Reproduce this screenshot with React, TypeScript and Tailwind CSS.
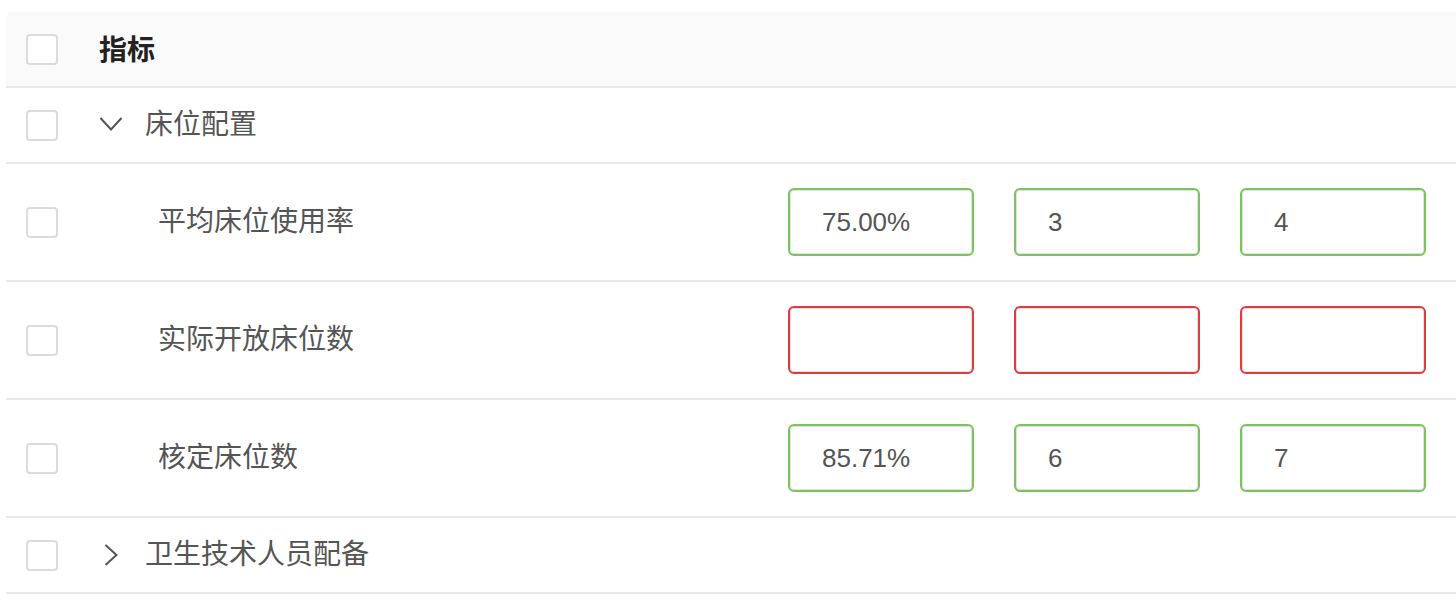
import React from 'react'

type Cell = { value: string; ok: boolean }

interface Metric {
  name: string
  cells: Cell[]
}

const metrics: Metric[] = [
  {
    name: '平均床位使用率',
    cells: [
      { value: '75.00%', ok: true },
      { value: '3', ok: true },
      { value: '4', ok: true },
    ],
  },
  {
    name: '实际开放床位数',
    cells: [
      { value: '', ok: false },
      { value: '', ok: false },
      { value: '', ok: false },
    ],
  },
  {
    name: '核定床位数',
    cells: [
      { value: '85.71%', ok: true },
      { value: '6', ok: true },
      { value: '7', ok: true },
    ],
  },
]

const font = { fontFamily: '"Liberation Sans", "Noto Sans CJK SC", sans-serif' }

function Checkbox() {
  return <span className="block w-[32px] h-[31px] rounded-[4px] border-2 border-[#dcdcdc] bg-white" />
}

function CheckCell() {
  return (
    <div className="w-[93px] shrink-0 pl-[20px] flex items-center">
      <Checkbox />
    </div>
  )
}

function Chevron({ open }: { open: boolean }) {
  return (
    <svg width="24" height="24" viewBox="0 0 24 24" className="shrink-0" fill="none" stroke="#555" strokeWidth="2">
      {open ? <path d="M1.5 5 L12 16.5 L22.5 5" /> : <path d="M6.5 2 L17.5 12 L6.5 22" />}
    </svg>
  )
}

function ValueInput({ cell }: { cell: Cell }) {
  return (
    <div
      className={`w-[186px] h-[68px] shrink-0 rounded-[6px] border-2 bg-white flex items-center pl-[32px] text-[26px] text-[#555] shadow-[inset_0_0_0_1px_#e2e2e2] ${
        cell.ok ? 'border-[#7cc35f]' : 'border-[#e0393e]'
      }`}
    >
      {cell.value}
    </div>
  )
}

export default function App() {
  return (
    <div className="w-[1456px] h-[602px] bg-white overflow-hidden pt-[12px] pl-[6px]" style={font}>
      <div className="w-[1450px]">
        <div className="h-[76px] flex items-center bg-[#fafafa] rounded-tl-[6px] border-b-2 border-[#e8e8e8]">
          <CheckCell />
          <div className="pt-[4px] text-[28px] font-bold text-[#222]">指标</div>
        </div>

        <div className="h-[76px] flex items-center border-b-2 border-[#e8e8e8]">
          <CheckCell />
          <div className="flex items-center gap-[22px] text-[28px] text-[#555]">
            <Chevron open />
            <span>床位配置</span>
          </div>
        </div>

        {metrics.map(m => (
          <div key={m.name} className="h-[118px] flex items-center border-b-2 border-[#e8e8e8]">
            <CheckCell />
            <div className="flex-1 pl-[59px] text-[28px] text-[#555]">{m.name}</div>
            <div className="flex gap-[40px] pr-[30px]">
              {m.cells.map((c, i) => (
                <ValueInput key={i} cell={c} />
              ))}
            </div>
          </div>
        ))}

        <div className="h-[76px] flex items-center border-b-2 border-[#e8e8e8]">
          <CheckCell />
          <div className="flex items-center gap-[22px] text-[28px] text-[#555]">
            <Chevron open={false} />
            <span>卫生技术人员配备</span>
          </div>
        </div>
      </div>
    </div>
  )
}
